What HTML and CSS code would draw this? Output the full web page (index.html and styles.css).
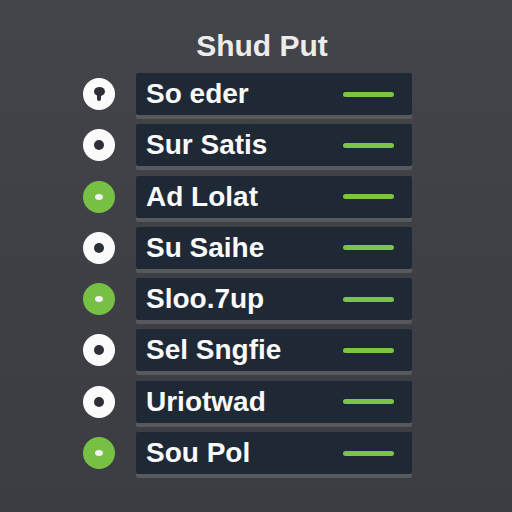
FILE: index.html
```html
<!DOCTYPE html>
<html>
<head>
<meta charset="utf-8">
<link rel="stylesheet" href="styles.css">
</head>
<body>
<div class="page">
  <h1 class="title">Shud Put</h1>
  <ul class="list">
    <li class="row"><span class="dot white keyhole"></span><div class="card"><span class="label">So eder</span><span class="bar"></span></div></li>
    <li class="row"><span class="dot white"></span><div class="card"><span class="label">Sur Satis</span><span class="bar"></span></div></li>
    <li class="row"><span class="dot green"></span><div class="card"><span class="label">Ad Lolat</span><span class="bar"></span></div></li>
    <li class="row"><span class="dot white"></span><div class="card"><span class="label">Su Saihe</span><span class="bar"></span></div></li>
    <li class="row"><span class="dot green"></span><div class="card"><span class="label">Sloo.7up</span><span class="bar"></span></div></li>
    <li class="row"><span class="dot white"></span><div class="card"><span class="label">Sel Sngfie</span><span class="bar"></span></div></li>
    <li class="row"><span class="dot white"></span><div class="card"><span class="label">Uriotwad</span><span class="bar"></span></div></li>
    <li class="row"><span class="dot green"></span><div class="card"><span class="label">Sou Pol</span><span class="bar"></span></div></li>
  </ul>
</div>
</body>
</html>
```

FILE: styles.css
```css
* { box-sizing: border-box; }
html, body { margin: 0; padding: 0; }
body {
  width: 512px;
  height: 512px;
  overflow: hidden;
  background: linear-gradient(180deg, #43454b 0%, #3e4046 50%, #3b3d43 100%);
  font-family: "Liberation Sans", Arial, sans-serif;
}
.page {
  padding-top: 31px;
}
.title {
  margin: 0;
  font-size: 30px;
  line-height: 30px;
  font-weight: 700;
  color: #ececec;
  text-align: center;
  padding-left: 12px;
}
.list {
  list-style: none;
  margin: 12px 0 0 0;
  padding: 0 0 0 83px;
  display: flex;
  flex-direction: column;
  gap: 9.3px;
}
.row {
  display: flex;
  align-items: center;
  gap: 21px;
  height: 42px;
}
.dot {
  width: 32px;
  height: 32px;
  border-radius: 50%;
  position: relative;
  flex: none;
}
.dot.white { background: #fbfbfb; }
.dot.white::after {
  content: "";
  position: absolute;
  left: 11px;
  top: 11px;
  width: 10px;
  height: 10px;
  border-radius: 50%;
  background: #2c2f35;
}
.dot.keyhole::after {
  top: 9px;
  width: 11px;
  height: 9px;
  left: 10.5px;
}
.dot.keyhole::before {
  content: "";
  position: absolute;
  left: 14px;
  top: 14px;
  width: 4px;
  height: 9px;
  border-radius: 2px;
  background: #2c2f35;
}
.dot.green { background: #77c043; }
.dot.green::after {
  content: "";
  position: absolute;
  left: 12px;
  top: 13px;
  width: 8px;
  height: 6px;
  border-radius: 50%;
  background: #f2f2f2;
}
.card {
  width: 276px;
  height: 42px;
  background: #1f2935;
  border-radius: 2px;
  box-shadow: 0 4px 0 #58595c;
  display: flex;
  align-items: center;
  justify-content: space-between;
  padding: 0 18px 0 10px;
}
.label {
  color: #fafafa;
  font-size: 28px;
  font-weight: 700;
  line-height: 42px;
  white-space: nowrap;
}
.bar {
  width: 51px;
  height: 5px;
  border-radius: 3px;
  background: #7cc444;
  flex: none;
}
```
